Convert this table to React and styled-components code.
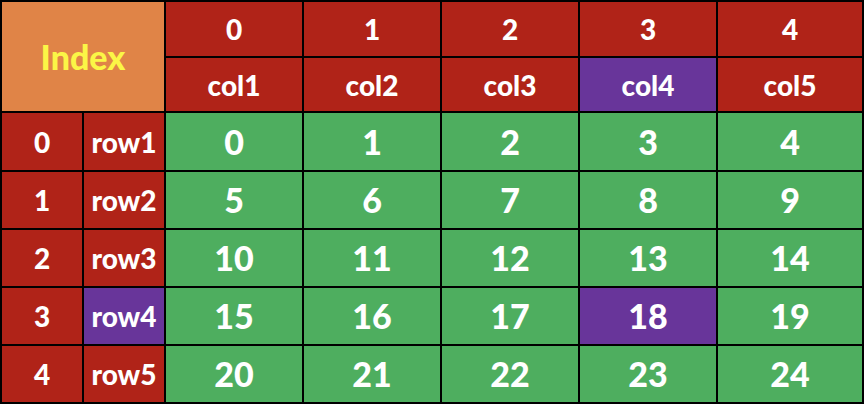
import React from "react";
import styled, { createGlobalStyle } from "styled-components";

const Global = createGlobalStyle`
  html, body { margin: 0; padding: 0; background: #000; }
  body { font-family: Lato, "Open Sans", sans-serif; }
`;

const COLORS = {
  red: "#B02318",
  orange: "#E08447",
  green: "#4EAE5F",
  purple: "#68359A",
};

const Grid = styled.div`
  display: grid;
  grid-template-columns: 80px 80px 136px 136px 136px 136px 144px;
  grid-template-rows: 54px 53px 57px 56px 56px 56px 56px;
  gap: 2px;
  padding: 2px;
  background: #000;
  width: 864px;
  height: 404px;
  box-sizing: border-box;
`;

const Cell = styled.div`
  display: flex;
  align-items: center;
  justify-content: center;
  background: ${(p) => COLORS[p.$bg]};
  color: #fff;
  font-weight: 900;
  font-size: ${(p) => (p.$big ? "34px" : "28px")};
  line-height: 1;
`;

const IndexCell = styled(Cell)`
  grid-column: span 2;
  grid-row: span 2;
  color: #fbf646;
  font-size: 34px;
`;

const cols = ["col1", "col2", "col3", "col4", "col5"];
const rows = ["row1", "row2", "row3", "row4", "row5"];

export default function App() {
  return (
    <>
      <Global />
      <Grid>
        <IndexCell $bg="orange">Index</IndexCell>
        {cols.map((_, i) => (
          <Cell key={"n" + i} $bg="red">
            {i}
          </Cell>
        ))}
        {cols.map((c, i) => (
          <Cell key={c} $bg={i === 3 ? "purple" : "red"}>
            {c}
          </Cell>
        ))}
        {rows.map((r, ri) => (
          <React.Fragment key={r}>
            <Cell $bg="red">{ri}</Cell>
            <Cell $bg={ri === 3 ? "purple" : "red"}>{r}</Cell>
            {cols.map((_, ci) => (
              <Cell
                key={ci}
                $big
                $bg={ri === 3 && ci === 3 ? "purple" : "green"}
              >
                {ri * 5 + ci}
              </Cell>
            ))}
          </React.Fragment>
        ))}
      </Grid>
    </>
  );
}
